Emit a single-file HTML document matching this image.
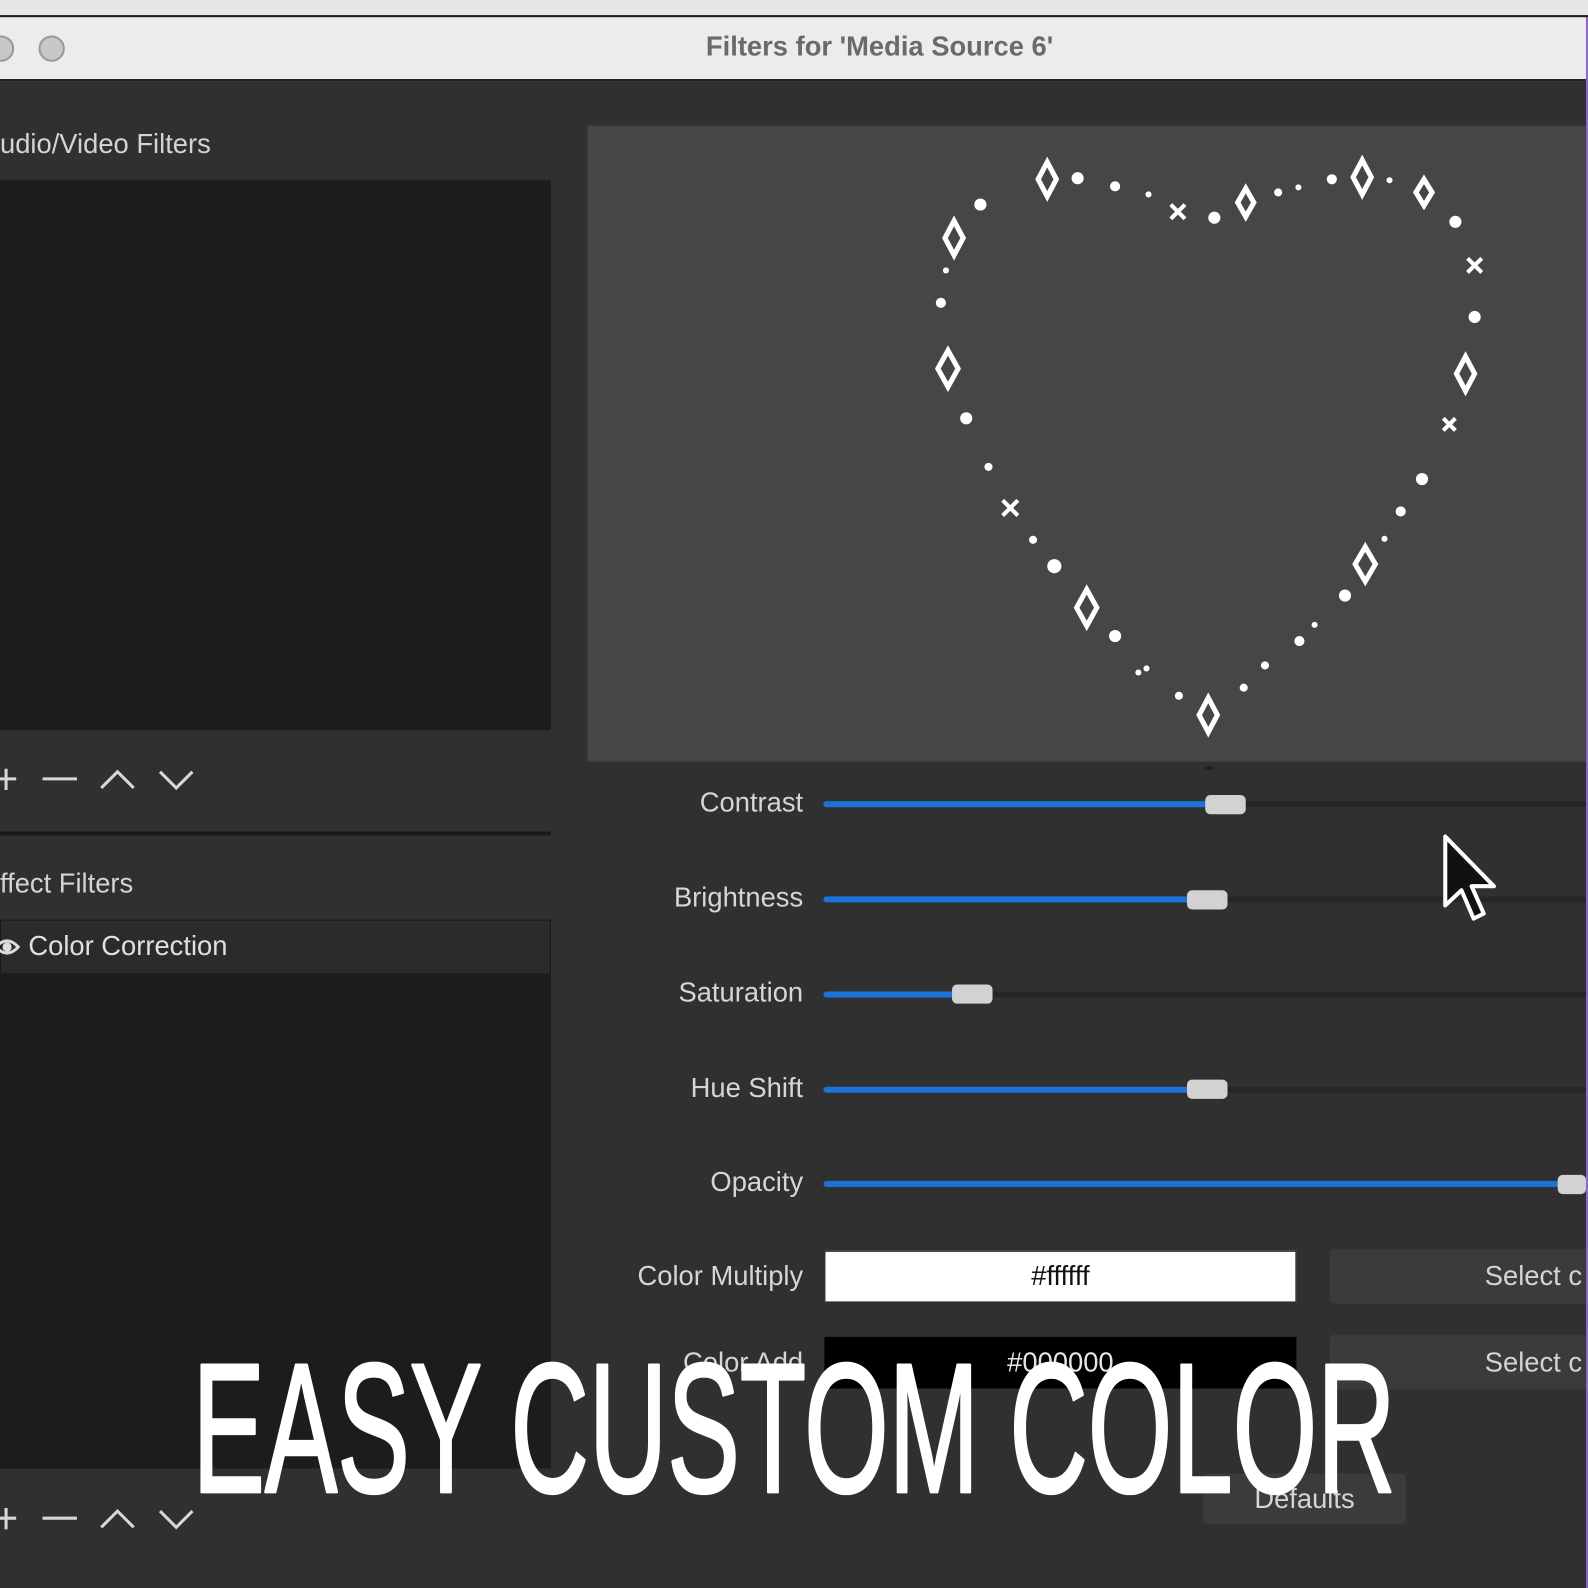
<!DOCTYPE html>
<html><head><meta charset="utf-8"><style>
*{margin:0;padding:0;box-sizing:border-box}
html{width:1588px;height:1588px;overflow:hidden}
body{width:1588px;height:1588px;background:#303030;position:relative;overflow:hidden;font-family:"Liberation Sans",sans-serif;color:#d4d4d4}
#w{position:absolute;left:0;top:0;width:1568px;height:1568px;transform:scale(1.0128);transform-origin:0 0}
.a{position:absolute}
.lbl{position:absolute;right:775px;font-size:27px;color:#d6d6d6;white-space:nowrap}
.trk{position:absolute;left:813px;width:753px;height:6px;background:#262626;border-radius:3px}
.fill{position:absolute;left:813px;height:6px;background:#1e72d6;border-radius:3px}
.hd{position:absolute;width:40px;height:19px;background:#d2d2d2;border-radius:5px}
</style></head><body><div id="w">
<div class="a" style="left:0;top:0;width:1568px;height:15px;background:#e6e6e6"></div>
<div class="a" style="left:0;top:15px;width:1568px;height:2px;background:#222"></div>
<div class="a" style="left:0;top:17px;width:1566px;height:63px;background:#ececec;border-bottom:2px solid #222"></div>
<div class="a" style="left:-12px;top:35px;width:26px;height:26px;border-radius:50%;background:#c8c8c8;border:2px solid #999"></div>
<div class="a" style="left:38px;top:35px;width:26px;height:26px;border-radius:50%;background:#c8c8c8;border:2px solid #999"></div>
<div class="a" style="left:697px;top:31px;font-size:27px;font-weight:bold;color:#6a6a6a">Filters for 'Media Source 6'</div>
<div class="a" style="left:1566px;top:17px;width:3px;height:1560px;background:#8a6ad0"></div>

<div class="a" style="left:0;top:127px;font-size:27px">udio/Video Filters</div>
<div class="a" style="left:0;top:178px;width:544px;height:543px;background:#1c1c1c"></div>
<svg class="a" style="left:0;top:750px" width="200" height="40" stroke="#d8d8d8" stroke-width="3" fill="none"><path d="M-4 19H16M6 9V30M42 19H76M100 28L116 12L132 28M158 12L174 28L190 12"/></svg>
<div class="a" style="left:0;top:821px;width:544px;height:4px;background:#1a1a1a"></div>
<div class="a" style="left:0;top:857px;font-size:27px">ffect Filters</div>
<div class="a" style="left:0;top:908px;width:544px;height:542px;background:#1c1c1c"></div>
<div class="a" style="left:0;top:908px;width:544px;height:54px;background:#2b2b2b;border:1px solid #1a1a1a"></div>
<svg class="a" style="left:-6px;top:922px" width="30" height="26" stroke="#ddd" stroke-width="3" fill="none"><path d="M2 13Q13 1 24 13Q13 25 2 13Z"/><circle cx="13" cy="13" r="3" fill="#ddd"/></svg>
<div class="a" style="left:28px;top:919px;font-size:27px;color:#e0e0e0">Color Correction</div>
<svg class="a" style="left:0;top:1480px" width="200" height="40" stroke="#d8d8d8" stroke-width="3" fill="none"><path d="M-4 19H16M6 9V30M42 19H76M100 28L116 12L132 28M158 12L174 28L190 12"/></svg>

<div class="a" style="left:580px;top:124px;width:986px;height:628px;background:#464646"></div>
<svg class="a" style="left:0;top:0" width="1568" height="760" fill="#fff" stroke="#fff">
<g stroke="none">
<circle cx="968" cy="202" r="6"/><circle cx="1064" cy="176" r="6"/><circle cx="1101" cy="184" r="5"/><circle cx="1134" cy="192" r="3"/><circle cx="1199" cy="215" r="6"/><circle cx="1262" cy="190" r="4"/><circle cx="1282" cy="185" r="3"/><circle cx="1315" cy="177" r="5"/><circle cx="1372" cy="178" r="3"/><circle cx="1437" cy="219" r="6"/><circle cx="1456" cy="313" r="6"/><circle cx="934" cy="267" r="3"/><circle cx="929" cy="299" r="5"/><circle cx="954" cy="413" r="6"/><circle cx="976" cy="461" r="4"/><circle cx="1020" cy="533" r="4"/><circle cx="1041" cy="559" r="7"/><circle cx="1101" cy="628" r="6"/><circle cx="1164" cy="687" r="4"/><circle cx="1228" cy="679" r="4"/><circle cx="1283" cy="633" r="5"/><circle cx="1298" cy="617" r="3"/><circle cx="1328" cy="588" r="6"/><circle cx="1367" cy="532" r="3"/><circle cx="1383" cy="505" r="5"/><circle cx="1404" cy="473" r="6"/><circle cx="1132" cy="660" r="3"/><circle cx="1124" cy="664" r="3"/><circle cx="1249" cy="657" r="4"/>
</g>
<g fill="none" stroke-width="5">
<path d="M1034 160L1043 177L1034 194L1025 177Z"/><path d="M1345 158L1354 175L1345 192L1336 175Z"/><path d="M1230 186L1238 200L1230 214L1222 200Z"/><path d="M942 218L951 235L942 252L933 235Z"/><path d="M1406 177L1414 190L1406 203L1398 190Z"/><path d="M936 346L946 364L936 382L926 364Z"/><path d="M1447 352L1456 369L1447 386L1438 369Z"/><path d="M1073 582L1083 600L1073 618L1063 600Z"/><path d="M1348 540L1358 557L1348 574L1338 557Z"/><path d="M1193 689L1202 706L1193 723L1184 706Z"/>
<path d="M1156 202L1170 216M1170 202L1156 216M1449 255L1463 269M1463 255L1449 269M990 494L1005 509M1005 494L990 509M1425 413L1437 425M1437 413L1425 425" stroke-width="4"/>
</g>
<circle cx="1194" cy="761" r="5" fill="#222" stroke="none"/>
</svg>

<div class="lbl" style="top:777px">Contrast</div>
<div class="trk" style="top:791px"></div><div class="fill" style="top:791px;width:380px"></div><div class="hd" style="left:1190px;top:785px"></div>
<div class="lbl" style="top:871px">Brightness</div>
<div class="trk" style="top:885px"></div><div class="fill" style="top:885px;width:362px"></div><div class="hd" style="left:1172px;top:879px"></div>
<div class="lbl" style="top:965px">Saturation</div>
<div class="trk" style="top:979px"></div><div class="fill" style="top:979px;width:130px"></div><div class="hd" style="left:940px;top:972px"></div>
<div class="lbl" style="top:1059px">Hue Shift</div>
<div class="trk" style="top:1073px"></div><div class="fill" style="top:1073px;width:362px"></div><div class="hd" style="left:1172px;top:1066px"></div>
<div class="lbl" style="top:1152px">Opacity</div>
<div class="trk" style="top:1166px"></div><div class="fill" style="top:1166px;width:730px"></div><div class="hd" style="left:1538px;top:1160px;width:28px"></div>

<div class="lbl" style="top:1245px">Color Multiply</div>
<div class="a" style="left:814px;top:1235px;width:466px;height:51px;background:#fff;border:1px solid #222;color:#111;font-size:27px;text-align:center;line-height:49px">#ffffff</div>
<div class="a" style="left:1313px;top:1233px;width:253px;height:54px;background:#3b3b3b;border-radius:4px 0 0 4px;font-size:27px;line-height:54px;padding-left:153px;white-space:nowrap;overflow:hidden">Select c</div>
<div class="lbl" style="top:1330px">Color Add</div>
<div class="a" style="left:814px;top:1320px;width:466px;height:51px;background:#000;color:#e6e6e6;font-size:27px;text-align:center;line-height:51px">#000000</div>
<div class="a" style="left:1313px;top:1318px;width:253px;height:54px;background:#3b3b3b;border-radius:4px 0 0 4px;font-size:27px;line-height:54px;padding-left:153px;white-space:nowrap;overflow:hidden">Select c</div>
<div class="a" style="left:1188px;top:1455px;width:200px;height:50px;background:#3b3b3b;border-radius:4px;font-size:27px;line-height:50px;text-align:center">Defaults</div>

<svg class="a" style="left:0;top:1330px" width="1568" height="170"><text x="190" y="143" textLength="1188" lengthAdjust="spacingAndGlyphs" font-family="Liberation Sans" font-size="182" fill="#fff" stroke="#fff" stroke-width="3" stroke-linejoin="round">EASY CUSTOM COLOR</text></svg>

<svg class="a" style="left:1422px;top:822px" width="64" height="92"><path d="M5 4V72L21 57L33 85L43 80L31 53L53 53Z" fill="#111" stroke="#fff" stroke-width="4" stroke-linejoin="round"/></svg>
</div></body></html>
